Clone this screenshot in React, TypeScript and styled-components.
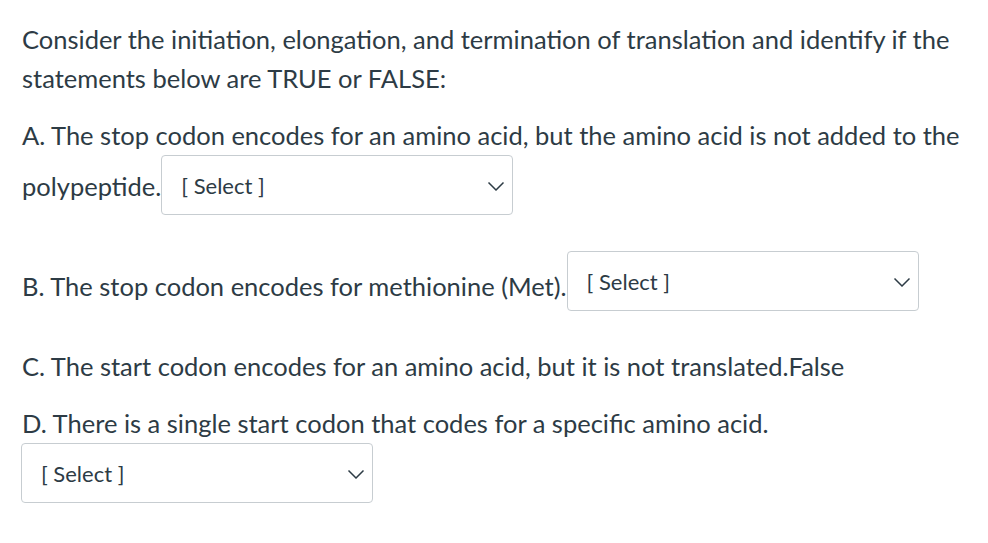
import styled, { createGlobalStyle } from 'styled-components';

const GlobalStyle = createGlobalStyle`
  body {
    margin: 0;
    background: #ffffff;
    font-family: Lato, "Noto Sans", sans-serif;
    color: #2d3b45;
  }
`;

const Page = styled.div`
  padding: 20px 22px 0 21px;
  font-size: 25.5px;
  line-height: 38.5px;
`;

const Para = styled.p`
  margin: 0 0 19px;
  padding-left: 1px;
`;

// inline dropdown placed in the running text; $lift raises it above the text baseline
const SelectBox = styled.span<{ $lift: number; $inset: number }>`
  display: inline-flex;
  align-items: center;
  justify-content: space-between;
  box-sizing: border-box;
  width: 352px;
  height: 60px;
  margin: 0 0 17px ${(p) => p.$inset}px;
  padding: 2px 7px 0 19px;
  border: 1px solid #c7cdd1;
  border-radius: 4px;
  background: #fff;
  vertical-align: ${(p) => p.$lift}px;
  font-size: 22px;
  line-height: 1;
`;

const Chevron = () => (
  <svg width="18" height="10" viewBox="0 0 18 10" fill="none">
    <path d="M1.5 1.5l7.5 7.5 7.5-7.5" stroke="#2d3b45" strokeWidth="1.5" />
  </svg>
);

const Select = ({ lift = 2, inset = 0 }: { lift?: number; inset?: number }) => (
  <SelectBox $lift={lift} $inset={inset}>
    <span>[ Select ]</span>
    <Chevron />
  </SelectBox>
);

const App = () => (
  <Page>
    <GlobalStyle />
    <Para>
      Consider the initiation, elongation, and termination of translation and identify if the
      statements below are TRUE or FALSE:
    </Para>
    <Para>
      A. The stop codon encodes for an amino acid, but the amino acid is not added to the
      polypeptide.<Select />
    </Para>
    <Para>
      B. The stop codon encodes for methionine (Met).<Select lift={6} />
    </Para>
    <Para>C. The start codon encodes for an amino acid, but it is not translated.False</Para>
    <Para>
      D. There is a single start codon that codes for a specific amino acid.<Select inset={-1} />
    </Para>
  </Page>
);

export default App;
